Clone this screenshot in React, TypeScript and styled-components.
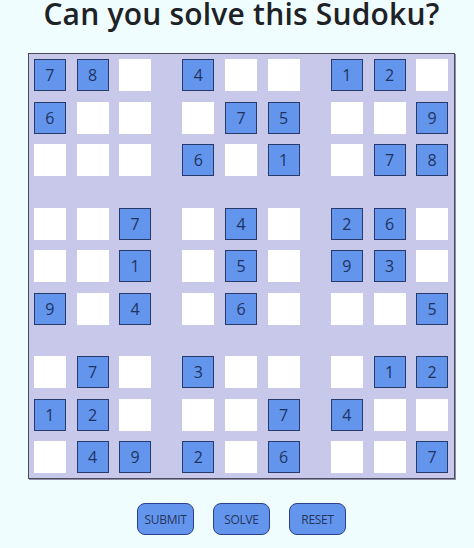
import React from "react";
import styled, { createGlobalStyle } from "styled-components";

const GlobalStyle = createGlobalStyle`
  html, body {
    margin: 0;
    padding: 0;
    background: #f0fdff;
  }
  body {
    font-family: "Open Sans", "Noto Sans", "DejaVu Sans", sans-serif;
  }
`;

const Page = styled.div`
  display: flex;
  flex-direction: column;
  align-items: center;
  padding-left: 9px;
  min-height: 548px;
  box-sizing: border-box;
`;

const Title = styled.h1`
  margin: 0;
  height: 53px;
  line-height: 27px;
  font-size: 30px;
  font-weight: 600;
  color: #1e2226;
  letter-spacing: 0.2px;
`;

const Board = styled.div`
  display: grid;
  grid-template-columns: repeat(3, auto);
  column-gap: 31.2px;
  row-gap: 31.2px;
  padding: 5px 6px 5px 5px;
  background: #c8c8ea;
  border: 1px solid #4a4a58;
  box-shadow: 1px 1px 0 #8e8ea8;
`;

const Block = styled.div`
  display: grid;
  grid-template-columns: repeat(3, 32px);
  grid-auto-rows: 32px;
  gap: 10.67px;
`;

const Cell = styled.div<{ $given: boolean }>`
  box-sizing: border-box;
  width: 32px;
  height: 32px;
  display: flex;
  align-items: center;
  justify-content: center;
  font-size: 16px;
  color: #1d3460;
  background: ${(p) => (p.$given ? "#6495ed" : "#ffffff")};
  border: 1px solid ${(p) => (p.$given ? "#283a6a" : "#ffffff")};
`;

const Actions = styled.div`
  display: flex;
  gap: 19px;
  margin-top: 24px;
`;

const Button = styled.button`
  box-sizing: border-box;
  width: 57px;
  height: 32px;
  padding: 0;
  border-radius: 8px;
  background: #6495ed;
  border: 1px solid #2d3f8f;
  color: #24365e;
  font-family: "Open Sans", "Noto Sans", sans-serif;
  font-size: 12px;
  letter-spacing: -0.3px;
`;

// Starting grid, one string per row; "." marks an empty square
const puzzle = [
  "78.4..12.",
  "6...75..9",
  "...6.1.78",
  "..7.4.26.",
  "..1.5.93.",
  "9.4.6...5",
  ".7.3...12",
  "12...74..",
  ".492.6..7",
];

const blockCells = (br: number, bc: number) => {
  const out: string[] = [];
  for (let r = 0; r < 3; r++) {
    for (let c = 0; c < 3; c++) {
      out.push(puzzle[br * 3 + r][bc * 3 + c]);
    }
  }
  return out;
};

export default function App() {
  const blocks: [number, number][] = [];
  for (let br = 0; br < 3; br++) for (let bc = 0; bc < 3; bc++) blocks.push([br, bc]);
  return (
    <>
      <GlobalStyle />
      <Page>
        <Title>Can you solve this Sudoku?</Title>
        <Board>
          {blocks.map(([br, bc]) => (
            <Block key={`${br}-${bc}`}>
              {blockCells(br, bc).map((ch, i) => (
                <Cell key={i} $given={ch !== "."}>
                  {ch !== "." ? ch : ""}
                </Cell>
              ))}
            </Block>
          ))}
        </Board>
        <Actions>
          <Button>SUBMIT</Button>
          <Button>SOLVE</Button>
          <Button>RESET</Button>
        </Actions>
      </Page>
    </>
  );
}
